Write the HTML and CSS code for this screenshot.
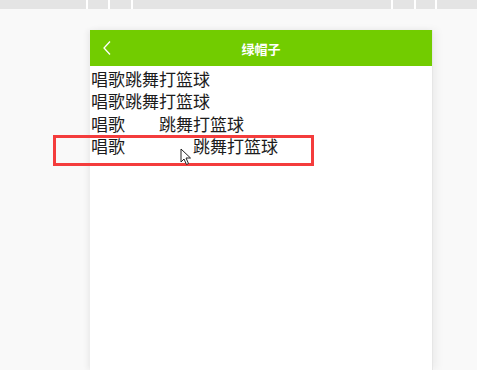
FILE: index.html
```html
<!DOCTYPE html>
<html lang="zh">
<head>
<meta charset="utf-8">
<link rel="stylesheet" href="styles.css">
</head>
<body>
<div class="topbar">
  <div class="seg s1"></div>
  <div class="seg s2"></div>
  <div class="seg s3"></div>
  <div class="seg s4"></div>
  <div class="seg s5"></div>
  <div class="seg s6"></div>
  <div class="seg s7"></div>
</div>
<div class="stage">
  <div class="phone">
    <div class="header">
      <svg class="back" width="10" height="16" viewBox="0 0 10 16"><path d="M8 1.5 L2 8 L8 14.5" fill="none" stroke="#fff" stroke-width="1.3"/></svg>
      <span class="title">绿帽子</span>
    </div>
    <div class="content">
      <div class="line">唱歌跳舞打篮球</div>
      <div class="line">唱歌跳舞打篮球</div>
      <div class="line">唱歌&emsp;&emsp;跳舞打篮球</div>
      <div class="line">唱歌&emsp;&emsp;&emsp;&emsp;跳舞打篮球</div>
    </div>
  </div>
</div>
<div class="highlight"></div>
<svg class="cursor" width="12" height="18" viewBox="0 0 12 18"><path d="M1 1 L1 14 L4 11 L6.5 16.5 L8.5 15.5 L6 10 L10.5 10 Z" fill="#fff" stroke="#222" stroke-width="1"/></svg>
</body>
</html>
```
FILE: styles.css
```css
html, body {
  margin: 0;
  padding: 0;
  height: 100%;
  overflow: hidden;
}
body {
  background: #f9f9f9;
  font-family: "Noto Sans CJK SC", "Noto Sans", sans-serif;
  position: relative;
}
.topbar {
  display: flex;
  gap: 2px;
  height: 9px;
  background: #fff;
}
.seg {
  background: #e4e4e4;
  height: 9px;
}
.s1 { width: 86px; }
.s2 { width: 20px; }
.s3 { width: 21px; }
.s4 { width: 258px; }
.s5 { width: 21px; }
.s6 { width: 19px; }
.s7 { flex: 1; }
.stage {
  padding-top: 21px;
  padding-left: 90px;
  height: calc(100% - 9px);
  box-sizing: border-box;
}
.phone {
  width: 342px;
  height: 100%;
  background: #fff;
  box-shadow: -3px 0 5px rgba(0,0,0,0.05), 4px 0 8px rgba(0,0,0,0.05);
  border-right: 1px solid #e6e6e6;
}
.header {
  height: 36px;
  background: #72cc00;
  display: flex;
  align-items: center;
  justify-content: center;
  position: relative;
}
.back {
  position: absolute;
  left: 12px;
  top: 10px;
}
.title {
  color: #fff;
  font-weight: bold;
  font-size: 13px;
}
.content {
  padding-top: 2px;
  padding-left: 1px;
  color: #1c1c1c;
  font-size: 17px;
  line-height: 22.3px;
}
.line {
  white-space: pre;
}
.highlight {
  position: absolute;
  left: 53px;
  top: 135px;
  width: 261px;
  height: 31px;
  box-sizing: border-box;
  border: 3px solid #f43c3c;
}
.cursor {
  position: absolute;
  left: 180px;
  top: 148px;
}
```
